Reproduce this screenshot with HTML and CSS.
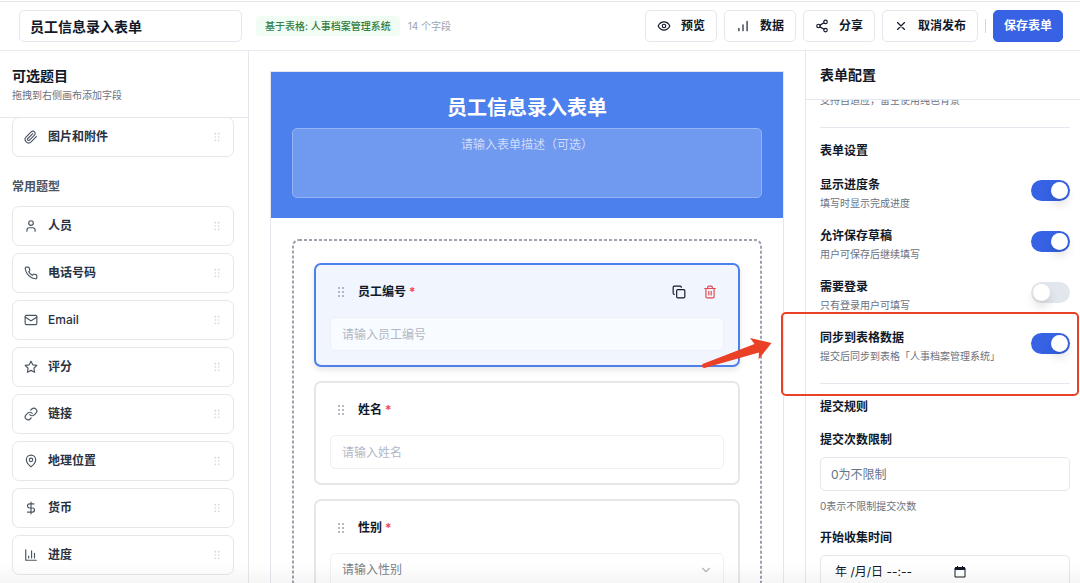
FILE: index.html
```html
<!DOCTYPE html>
<html lang="zh-CN">
<head>
<meta charset="utf-8">
<title>员工信息录入表单</title>
<link rel="stylesheet" href="styles.css">
</head>
<body>
<svg class="sprite" aria-hidden="true">
  <symbol id="grip" viewBox="0 0 24 24"><g fill="currentColor" stroke="none"><circle cx="8" cy="4" r="2"/><circle cx="16" cy="4" r="2"/><circle cx="8" cy="12" r="2"/><circle cx="16" cy="12" r="2"/><circle cx="8" cy="20" r="2"/><circle cx="16" cy="20" r="2"/></g></symbol>
</svg>
<div class="app">
  <header class="topbar">
    <input class="form-name" type="text" value="员工信息录入表单" aria-label="表单名称">
    <span class="chip">基于表格: 人事档案管理系统</span>
    <span class="count">14 个字段</span>
    <div class="actions">
      <button class="btn" type="button"><svg class="icon" viewBox="0 0 24 24"><path d="M2 12s3.500-7 10-7 10 7 10 7-3.500 7-10 7-10-7-10-7Z"/><circle cx="12" cy="12" r="3"/></svg>预览</button>
      <button class="btn" type="button"><svg class="icon" viewBox="0 0 24 24"><path d="M5 20v-4M12 20V10M19 20V4"/></svg>数据</button>
      <button class="btn" type="button"><svg class="icon" viewBox="0 0 24 24"><circle cx="18" cy="5" r="3"/><circle cx="6" cy="12" r="3"/><circle cx="18" cy="19" r="3"/><path d="m8.600 13.500 6.800 4M15.400 6.500l-6.800 4"/></svg>分享</button>
      <button class="btn" type="button"><svg class="icon" viewBox="0 0 24 24"><path d="M18 6 6 18M6 6l12 12"/></svg>取消发布</button>
      <span class="separator"></span>
      <button class="btn btn-primary" type="button">保存表单</button>
    </div>
  </header>

  <div class="body">
    <aside class="palette">
      <div class="palette-head">
        <h2>可选题目</h2>
        <p>拖拽到右侧画布添加字段</p>
      </div>
      <div class="palette-scroll">
        <ul class="items">
          <li class="item"><svg class="icon" viewBox="0 0 24 24"><path d="m21.440 11.050-9.190 9.190a6 6 0 0 1-8.490-8.490l8.570-8.570A4 4 0 1 1 18 8.840l-8.590 8.570a2 2 0 0 1-2.830-2.830l8.490-8.480"/></svg><span>图片和附件</span><svg class="grip"><use href="#grip"/></svg></li>
        </ul>
        <h3>常用题型</h3>
        <ul class="items">
          <li class="item"><svg class="icon" viewBox="0 0 24 24"><path d="M19 21v-2a4 4 0 0 0-4-4H9a4 4 0 0 0-4 4v2"/><circle cx="12" cy="7" r="4"/></svg><span>人员</span><svg class="grip"><use href="#grip"/></svg></li>
          <li class="item"><svg class="icon" viewBox="0 0 24 24"><path d="M22 16.920v3a2 2 0 0 1-2.180 2 19.790 19.790 0 0 1-8.630-3.070 19.500 19.500 0 0 1-6-6 19.790 19.790 0 0 1-3.070-8.670A2 2 0 0 1 4.110 2h3a2 2 0 0 1 2 1.720 12.840 12.840 0 0 0 .7 2.810 2 2 0 0 1-.45 2.110L8.090 9.910a16 16 0 0 0 6 6l1.270-1.270a2 2 0 0 1 2.110-.45 12.840 12.840 0 0 0 2.810.7A2 2 0 0 1 22 16.920z"/></svg><span>电话号码</span><svg class="grip"><use href="#grip"/></svg></li>
          <li class="item"><svg class="icon" viewBox="0 0 24 24"><rect x="2" y="4" width="20" height="16" rx="2"/><path d="m22 7-8.970 5.700a1.940 1.940 0 0 1-2.060 0L2 7"/></svg><span class="latin">Email</span><svg class="grip"><use href="#grip"/></svg></li>
          <li class="item"><svg class="icon" viewBox="0 0 24 24"><path d="m12 2 3.090 6.260L22 9.270l-5 4.870 1.180 6.880L12 17.770l-6.180 3.250L7 14.140 2 9.270l6.910-1.010L12 2z"/></svg><span>评分</span><svg class="grip"><use href="#grip"/></svg></li>
          <li class="item"><svg class="icon" viewBox="0 0 24 24"><path d="M10 13a5 5 0 0 0 7.540.54l3-3a5 5 0 0 0-7.070-7.070l-1.720 1.710"/><path d="M14 11a5 5 0 0 0-7.540-.54l-3 3a5 5 0 0 0 7.070 7.070l1.710-1.710"/></svg><span>链接</span><svg class="grip"><use href="#grip"/></svg></li>
          <li class="item"><svg class="icon" viewBox="0 0 24 24"><path d="M20 10c0 6-8 12-8 12s-8-6-8-12a8 8 0 0 1 16 0Z"/><circle cx="12" cy="10" r="3"/></svg><span>地理位置</span><svg class="grip"><use href="#grip"/></svg></li>
          <li class="item"><svg class="icon" viewBox="0 0 24 24"><path d="M12 2v20M17 5H9.500a3.500 3.500 0 0 0 0 7h5a3.500 3.500 0 0 1 0 7H6"/></svg><span>货币</span><svg class="grip"><use href="#grip"/></svg></li>
          <li class="item"><svg class="icon" viewBox="0 0 24 24"><path d="M3 3v18h18M18 17V9M13 17V5M8 17v-3"/></svg><span>进度</span><svg class="grip"><use href="#grip"/></svg></li>
        </ul>
      </div>
    </aside>

    <main class="canvas">
      <div class="sheet">
        <div class="hero">
          <h1>员工信息录入表单</h1>
          <textarea aria-label="表单描述" placeholder="请输入表单描述（可选）"></textarea>
        </div>
        <div class="sheet-body">
          <div class="dropzone">
            <svg class="dashes" aria-hidden="true"><rect x="1" y="1" rx="6"/></svg>
            <section class="field selected">
              <div class="field-head">
                <span class="handle"><svg class="icon"><use href="#grip"/></svg></span>
                <label for="f-id">员工编号 <span class="required">*</span></label>
                <div class="tools">
                  <button type="button" aria-label="复制"><svg class="icon" viewBox="0 0 24 24"><rect x="8" y="8" width="14" height="14" rx="2"/><path d="M4 16c-1.100 0-2-.9-2-2V4c0-1.100.9-2 2-2h10c1.100 0 2 .9 2 2"/></svg></button>
                  <button class="danger" type="button" aria-label="删除"><svg class="icon" viewBox="0 0 24 24"><path d="M3 6h18M19 6v14a2 2 0 0 1-2 2H7a2 2 0 0 1-2-2V6M8 6V4a2 2 0 0 1 2-2h4a2 2 0 0 1 2 2v2M10 11v6M14 11v6"/></svg></button>
                </div>
              </div>
              <input id="f-id" class="control" type="text" placeholder="请输入员工编号">
            </section>
            <section class="field">
              <div class="field-head">
                <span class="handle"><svg class="icon"><use href="#grip"/></svg></span>
                <label for="f-name">姓名 <span class="required">*</span></label>
              </div>
              <input id="f-name" class="control" type="text" placeholder="请输入姓名">
            </section>
            <section class="field">
              <div class="field-head">
                <span class="handle"><svg class="icon"><use href="#grip"/></svg></span>
                <label for="f-sex">性别 <span class="required">*</span></label>
              </div>
              <div class="select-wrap">
                <select id="f-sex" class="control"><option>请输入性别</option></select>
                <svg class="icon chevron" viewBox="0 0 24 24"><path d="m6 9 6 6 6-6"/></svg>
              </div>
            </section>
          </div>
        </div>
      </div>
    </main>

    <aside class="config">
      <h2 class="config-head">表单配置</h2>
      <div class="config-scroll">
        <p class="hint scrolled">支持自适应，留空使用纯色背景</p>
        <section class="group">
          <h3>表单设置</h3>
          <div class="switches">
            <div class="switch-row"><div><label for="s1">显示进度条</label><p class="hint">填写时显示完成进度</p></div><input id="s1" class="switch" type="checkbox" checked></div>
            <div class="switch-row"><div><label for="s2">允许保存草稿</label><p class="hint">用户可保存后继续填写</p></div><input id="s2" class="switch" type="checkbox" checked></div>
            <div class="switch-row"><div><label for="s3">需要登录</label><p class="hint">只有登录用户可填写</p></div><input id="s3" class="switch" type="checkbox"></div>
            <div class="switch-row"><div><label for="s4">同步到表格数据</label><p class="hint">提交后同步到表格「人事档案管理系统」</p></div><input id="s4" class="switch" type="checkbox" checked></div>
          </div>
        </section>
        <section class="group">
          <h3>提交规则</h3>
          <div class="setting">
            <label for="limit">提交次数限制</label>
            <input id="limit" class="box" type="text" placeholder="0为不限制">
            <p class="hint">0表示不限制提交次数</p>
          </div>
          <div class="setting">
            <label for="start">开始收集时间</label>
            <div class="box date-box">
              <input id="start" type="text" value="年 /月/日 --:--">
              <button type="button" aria-label="选择日期"><svg viewBox="0 0 12 12"><path d="M1 2h10v9H1z" fill="none" stroke="currentColor"/><path d="M1 1h10v3H1zM3 0h1v2H3zM8 0h1v2H8z" fill="currentColor"/></svg></button>
            </div>
          </div>
        </section>
      </div>
    </aside>
  </div>

  <div class="callout"></div>
  <svg class="arrow" viewBox="0 0 72 32"><path d="M2.500 27 54.500 7 50 1 71.500 6 58.500 22.500 59 15.500 4.500 31Q1 31 2.500 27Z"/></svg>
</div>
</body>
</html>
```

FILE: styles.css
```css
* { box-sizing: border-box; }

body, h1, h2, h3, p, ul { margin: 0; padding: 0; }

body {
  font-family: Inter, "Noto Sans CJK SC", sans-serif;
  font-size: 12px;
  line-height: 18px;
  color: #111827;
  background: #fff;
}

input, textarea, select, button { font: inherit; color: inherit; margin: 0; }
button { cursor: pointer; }
ul { list-style: none; }

.sprite { display: none; }

.icon {
  display: block;
  flex: none;
  width: 14px;
  height: 14px;
  fill: none;
  stroke: currentColor;
  stroke-width: 2;
  stroke-linecap: round;
  stroke-linejoin: round;
}

.app {
  position: relative;
  display: flex;
  flex-direction: column;
  height: 100vh;
  padding-top: 1px;
  overflow: hidden;
}

.app::after {
  content: "";
  position: absolute;
  left: 0;
  right: 0;
  bottom: 0;
  height: 20px;
  background: linear-gradient(transparent, rgba(0, 0, 0, 0.04));
  pointer-events: none;
}

/* Top bar */
.topbar {
  display: flex;
  align-items: center;
  flex: none;
  height: 50px;
  padding: 0 17px 0 19px;
  border-top: 1px solid #e5e7eb;
  border-bottom: 1px solid #e8eaf1;
}

.form-name {
  width: 223px;
  height: 32px;
  padding: 0 10px;
  border: 1px solid #e5e7ef;
  border-radius: 5px;
  font-size: 14px;
  font-weight: 600;
  background: #fff;
}

.chip {
  margin-left: 14px;
  padding: 0 9px;
  border-radius: 4px;
  font-size: 10px;
  font-weight: 500;
  line-height: 20px;
  color: #347d3d;
  background: #f1fcf4;
  white-space: nowrap;
}

.count {
  margin-left: 8px;
  font-size: 10px;
  color: #9ca3af;
  white-space: nowrap;
}

.actions {
  display: flex;
  align-items: center;
  gap: 7px;
  margin-left: auto;
}

.btn {
  display: flex;
  align-items: center;
  gap: 10px;
  height: 32px;
  padding: 0 11px;
  border: 1px solid #e5e7ef;
  border-radius: 5px;
  font-weight: 600;
  background: #fff;
  white-space: nowrap;
}

.btn-primary {
  padding: 0 10px;
  border-color: #3662e3;
  color: #fff;
  background: #3662e3;
}

.separator { width: 1px; height: 14px; background: #d1d5db; }

.body { display: flex; flex: 1; min-height: 0; }

/* Field palette */
.palette {
  display: flex;
  flex-direction: column;
  flex: none;
  width: 249px;
  border-right: 1px solid #e5e7ef;
}

.palette-head {
  padding: 14px 12px;
  border-bottom: 1px solid #e5e7ef;
}

.palette h2, .config h2 { font-size: 14px; font-weight: 600; line-height: 22px; }

.palette-head p {
  font-size: 10px;
  line-height: 16px;
  color: #6b7280;
}

.palette-scroll {
  flex: 1;
  min-height: 0;
  margin-top: -1px;
  padding: 0 14px 0 12px;
  overflow: hidden;
}

.palette h3 {
  padding: 20px 0 10px;
  font-size: 12px;
  font-weight: 600;
  line-height: 19px;
  color: #4b5563;
}

.items { display: flex; flex-direction: column; gap: 7px; }

.item {
  display: flex;
  align-items: center;
  gap: 10px;
  height: 40px;
  padding: 0 10px 0 11px;
  border: 1px solid #e5e7eb;
  border-radius: 7px;
  font-weight: 600;
  color: #293241;
}

.item .icon { color: #4b5563; }
.item span { flex: 1; }
.item .latin { font-weight: 500; }
.grip { width: 12px; height: 10px; color: #d1d5db; }

/* Canvas */
.canvas {
  flex: 1;
  min-width: 0;
  padding: 20px 21px;
  overflow: hidden;
}

.sheet { border: 1px solid #e5e7ef; }

.hero {
  display: flex;
  flex-direction: column;
  gap: 5px;
  padding: 21px 21px 20px;
  background: #4c81ed;
}

.hero h1 {
  font-size: 20px;
  font-weight: 700;
  line-height: 30px;
  text-align: center;
  color: #fff;
}

.hero textarea {
  display: block;
  height: 70px;
  padding: 7px 11px;
  border: 1px solid #94b3f4;
  border-radius: 5px;
  line-height: 18px;
  text-align: center;
  color: #fff;
  background: #7099f0;
  resize: none;
}

.hero textarea::placeholder { color: #cfdcfa; }

.sheet-body { padding: 21px; }

.dropzone {
  position: relative;
  display: flex;
  flex-direction: column;
  gap: 14px;
  padding: 24px 22px;
}

.dashes {
  position: absolute;
  inset: 0;
  width: 100%;
  height: 100%;
  pointer-events: none;
}

.dashes rect {
  width: calc(100% - 2px);
  height: calc(100% - 2px);
  fill: none;
  stroke: #9ca3af;
  stroke-width: 2;
  stroke-dasharray: 3 2;
}

.field {
  padding: 12px 14px 14px;
  border: 2px solid #e5e7eb;
  border-radius: 7px;
}

.field.selected {
  border-color: #4c81ed;
  background: #f0f5fe;
  box-shadow: 0 3px 6px rgba(0, 0, 0, 0.1);
}

.field-head {
  display: flex;
  align-items: center;
  gap: 7px;
  height: 30px;
  margin-bottom: 10px;
  font-weight: 600;
}

.handle { padding: 0 3px 0 4px; color: #9ca3af; }
.handle .icon { height: 12px; }
.required { color: #ef4444; }
.tools { display: flex; gap: 3px; margin-left: auto; }

.tools button {
  display: grid;
  place-items: center;
  width: 28px;
  height: 28px;
  padding: 0;
  border: 0;
  background: none;
}

.tools .danger { color: #e5484d; }

.control {
  display: block;
  width: 100%;
  height: 34px;
  padding: 0 11px;
  border: 1px solid #f0f1f5;
  border-radius: 5px;
  background: #fff;
}

.control::placeholder { color: #b1b8c5; }
.selected .control { border-color: #ebf0f9; background: #f8fbff; }

.select-wrap { position: relative; }
.select-wrap select { appearance: none; color: #7c7f86; }

.chevron {
  position: absolute;
  top: 10px;
  right: 11px;
  color: #b4b8bf;
  pointer-events: none;
}

/* Form configuration */
.config {
  display: flex;
  flex-direction: column;
  flex: none;
  width: 275px;
  border-left: 1px solid #e5e7ef;
}

.config .config-head {
  padding: 13px 14px;
  border-bottom: 1px solid #e5e7ef;
}

.config-scroll {
  flex: 1;
  min-height: 0;
  padding: 0 10px 0 14px;
  overflow: hidden;
}

.hint { font-size: 10px; line-height: 16px; color: #6b7280; white-space: nowrap; }

/* The panel is scrolled so that this line is half out of view. */
.scrolled { margin: -8px 0 19px; }

.group { padding: 14px 0 19px; border-top: 1px solid #e5e7ef; }
.group h3 { font-size: 12px; font-weight: 600; line-height: 18px; }
.group label { display: block; font-weight: 600; line-height: 20px; }

.switches { display: flex; flex-direction: column; gap: 15px; margin-top: 15px; }
.switch-row { display: flex; justify-content: space-between; }

.switch {
  appearance: none;
  flex: none;
  width: 39px;
  height: 21px;
  margin-top: 5px;
  padding: 2px;
  border-radius: 11px;
  background: #e2e7ed;
  cursor: pointer;
}

.switch::before {
  content: "";
  display: block;
  width: 17px;
  height: 17px;
  border-radius: 50%;
  background: #fff;
  box-shadow: 0 6px 10px rgba(0, 0, 0, 0.12);
}

.switch:checked { background: #3662e3; }
.switch:checked::before { margin-left: auto; }

.setting { margin-top: 14px; }

.box {
  display: block;
  width: 100%;
  height: 34px;
  margin: 7px 0;
  padding: 0 10px;
  border: 1px solid #e5e7ef;
  border-radius: 5px;
  background: #fff;
}

.box::placeholder { color: #64748b; }

.date-box { display: flex; align-items: center; padding: 0 14px; }

.date-box input {
  width: 119px;
  padding: 0;
  border: 0;
  background: none;
}

.date-box button { width: 12px; height: 12px; padding: 0; border: 0; background: none; }
.date-box svg { display: block; width: 12px; height: 12px; }

/* Annotation drawn over the page */
.callout {
  position: absolute;
  top: 312px;
  right: 1px;
  width: 298px;
  height: 84px;
  border: 2px solid #ea4026;
  border-radius: 5px;
  pointer-events: none;
}

.arrow {
  position: absolute;
  top: 337px;
  right: 308px;
  width: 72px;
  height: 32px;
  fill: #ea4026;
  pointer-events: none;
}
```
